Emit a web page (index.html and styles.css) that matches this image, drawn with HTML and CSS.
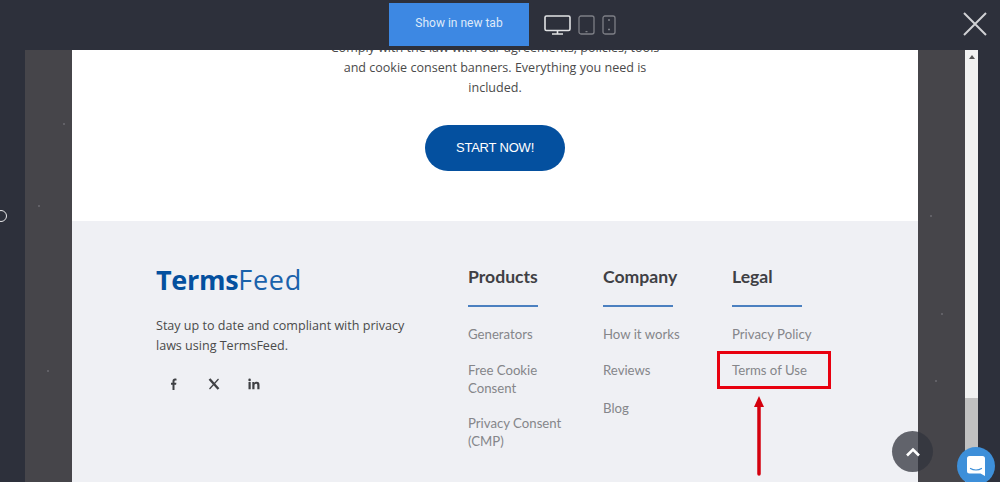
FILE: index.html
```html
<!DOCTYPE html>
<html lang="en">
<head>
    <meta charset="UTF-8">
    <meta name="viewport" content="width=device-width, initial-scale=1.0">
    <title>TermsFeed preview</title>
    <link rel="stylesheet" href="styles.css">
</head>
<body>
    <header class="topbar">
        <a class="new-tab" href="#">Show in new tab</a>
        <div class="devices">
            <svg width="27" height="20" viewBox="0 0 27 20" fill="none" stroke="#e2e3e5" stroke-width="1.6">
                <rect x="1" y="1" width="25" height="14.500" rx="1.500"/>
                <path d="M13.500 15.500v3M8 19h11"/>
            </svg>
            <svg width="17" height="20" viewBox="0 0 17 20" fill="none" stroke="#7d7f86" stroke-width="1.3">
                <rect x="1" y="1" width="15" height="18" rx="2"/>
                <path d="M7.500 16.600h2"/>
            </svg>
            <svg width="14" height="20" viewBox="0 0 14 20" fill="none" stroke="#7d7f86" stroke-width="1.3">
                <rect x="1" y="1" width="12" height="18" rx="2"/>
                <path d="M6 5h2M6 14.500h2" stroke-width="1.6"/>
            </svg>
        </div>
        <svg class="close" width="26" height="26" viewBox="0 0 26 26" stroke="#d0d1d4" stroke-width="2">
            <path d="M2 2l22 22M24 2L2 24"/>
        </svg>
    </header>

    <div class="stage">
        <div class="backdrop">
            <i class="star s1"></i><i class="star s2"></i><i class="star s3"></i><i class="star s4"></i><i class="star s5"></i><i class="star s6"></i>
            <div class="page">
                <section class="cta">
                    <p>Comply with the law with our agreements, policies, tools<br>and cookie consent banners. Everything you need is<br>included.</p>
                    <a class="start-btn" href="#">START NOW!</a>
                </section>
                <footer class="footer">
                    <div class="about">
                        <div class="logo"><b>Terms</b>Feed</div>
                        <p>Stay up to date and compliant with privacy laws using TermsFeed.</p>
                        <div class="social">
                            <svg width="12" height="12" viewBox="0 0 12 12" fill="#3f4044"><path d="M4.500 12V6.700H3V4.700h1.500V3.300C4.500 1.500 5.500.6 7 .6c.7 0 1.200.1 1.500.1v1.800h-1c-.8 0-1 .4-1 1v1.200h1.900l-.3 2H6.500V12z"/></svg>
                            <svg width="12" height="12" viewBox="0 0 12 12" fill="none" stroke="#3f4044"><path d="M1.500 1l9 10" stroke-width="2.400"/><path d="M10.500 1L1.500 11" stroke-width="1.200"/></svg>
                            <svg width="12" height="12" viewBox="0 0 12 12" fill="#3f4044"><circle cx="1.600" cy="1.900" r="1.300"/><path d="M.5 4h2.200v7.200H.5zM4.300 4h2.100v1c.4-.7 1.200-1.200 2.300-1.200 2 0 2.800 1.200 2.800 3.200v4.200H9.300V7.400c0-1-.3-1.700-1.200-1.700-1 0-1.600.7-1.600 1.800v3.700H4.300z"/></svg>
                        </div>
                    </div>
                    <nav class="links">
                        <div class="col col-products">
                            <h4>Products</h4>
                            <a href="#">Generators</a>
                            <a href="#">Free Cookie Consent</a>
                            <a href="#">Privacy Consent (CMP)</a>
                        </div>
                        <div class="col col-company">
                            <h4>Company</h4>
                            <a href="#">How it works</a>
                            <a href="#">Reviews</a>
                            <a class="blog" href="#">Blog</a>
                        </div>
                        <div class="col col-legal">
                            <h4>Legal</h4>
                            <a href="#">Privacy Policy</a>
                            <a class="marked" href="#">Terms of Use</a>
                        </div>
                    </nav>
                </footer>
            </div>
        </div>
        <div class="scrollbar">
            <span class="arrow-up"></span>
            <span class="thumb"></span>
        </div>
    </div>

    <i class="ring"></i>
    <svg class="red-arrow" width="10" height="80" viewBox="0 0 10 80">
        <path d="M5 0L10 11H0z" fill="#d4000e"/>
        <path d="M5 8v70" stroke="#d4000e" stroke-width="3.500" stroke-linecap="round"/>
    </svg>
    <div class="to-top">
        <svg width="16" height="10" viewBox="0 0 16 10" fill="none" stroke="#fff" stroke-width="2.600"><path d="M2 8.500l6-6 6 6"/></svg>
    </div>
    <div class="chat">
        <svg width="18" height="20" viewBox="0 0 18 20">
            <path d="M2.500 0h13A2.500 2.500 0 0 1 18 2.500V20l-4.500-2.500h-11A2.500 2.500 0 0 1 0 15V2.500A2.500 2.500 0 0 1 2.500 0z" fill="#fff"/>
            <path d="M3.500 12.500c3 2 8 2 11 0" fill="none" stroke="#3d8fd9" stroke-width="1.200" stroke-linecap="round"/>
        </svg>
    </div>
</body>
</html>
```

FILE: styles.css
```css
* {
    margin: 0;
    padding: 0;
    box-sizing: border-box;
}

html, body {
    height: 100%;
    overflow: hidden;
}

body {
    position: relative;
    display: flex;
    flex-direction: column;
    font-family: 'Open Sans', 'Noto Sans', sans-serif;
    background: #2d303b;
}

a {
    text-decoration: none;
    color: inherit;
}

.topbar {
    height: 50px;
    flex: none;
    position: relative;
    display: flex;
    justify-content: center;
    padding: 3px 0 0 6px;
    gap: 15px;
    background: #2d303b;
}

.new-tab {
    width: 140px;
    height: 43px;
    padding-top: 13px;
    background: #3d88e3;
    color: #dfeafa;
    font-family: 'Roboto', sans-serif;
    font-size: 12px;
    text-align: center;
}

.devices {
    display: flex;
    align-items: center;
    gap: 7px;
    height: 43px;
    width: 73px;
}

.close {
    position: absolute;
    right: 12px;
    top: 11px;
}

.stage {
    flex: 1;
    min-height: 0;
    display: flex;
    padding: 0 22px 0 25px;
}

.backdrop {
    flex: 1;
    position: relative;
    overflow: hidden;
    padding: 0 47px;
    background: #46454a;
}

.star {
    position: absolute;
    width: 2px;
    height: 2px;
    border-radius: 50%;
    background: #6b6a70;
}

.s1 { left: 38px; top: 73px; }
.s2 { left: 13px; top: 155px; }
.s3 { left: 22px; top: 320px; }
.s4 { left: 905px; top: 165px; }
.s5 { left: 916px; top: 263px; }
.s6 { left: 910px; top: 330px; }

.page {
    height: 100%;
    background: #fff;
    overflow: hidden;
}

.cta {
    height: 171px;
    text-align: center;
    overflow: hidden;
}

.cta p {
    margin-top: -12px;
    color: #4a4a4a;
    font-size: 12.55px;
    line-height: 20px;
}

.start-btn {
    display: block;
    width: 140px;
    height: 46px;
    margin: 27px auto 0;
    border-radius: 23px;
    background: #04509f;
    color: #fff;
    font-family: 'Liberation Sans', sans-serif;
    font-size: 13px;
    letter-spacing: -0.2px;
    line-height: 46px;
}

.footer {
    height: 261px;
    display: flex;
    padding: 43px 0 0 84px;
    background: #eff0f4;
}

.about {
    width: 312px;
    flex: none;
}

.logo {
    color: #1a62ab;
    font-size: 27px;
    line-height: 32px;
    letter-spacing: 0.7px;
}

.logo b {
    color: #04509f;
    font-weight: 700;
    letter-spacing: -0.3px;
}

.about p {
    width: 262px;
    margin-top: 20px;
    color: #4a4a4a;
    font-size: 12.55px;
    line-height: 20px;
}

.social {
    display: flex;
    gap: 28px;
    margin-top: 22px;
    padding-left: 12px;
}

.links {
    display: flex;
    margin-top: 1px;
}

.col {
    display: flex;
    flex-direction: column;
    align-items: flex-start;
    font-family: 'Lato', sans-serif;
    font-size: 13.2px;
    line-height: 18px;
    color: #85868a;
}

.col-products { width: 135px; }
.col-company { width: 129px; }
.col-legal { width: 110px; }

.col h4 {
    width: 70px;
    height: 42px;
    margin-bottom: 18px;
    border-bottom: 2px solid #4b80c0;
    color: #3f4044;
    font-size: 17.6px;
    font-weight: 700;
    line-height: 24px;
    white-space: nowrap;
}

.col a {
    margin-bottom: 17.5px;
    max-width: 100px;
}

.col .blog {
    margin-top: 3px;
}

.marked {
    position: relative;
}

.marked::after {
    content: "";
    position: absolute;
    left: -15px;
    top: -10px;
    width: 108px;
    height: 32px;
    border: 3px solid #e8000f;
}

.scrollbar {
    width: 13px;
    flex: none;
    position: relative;
    background: #f1f1f1;
}

.arrow-up {
    position: absolute;
    left: 4px;
    top: 5px;
    border: 3px solid transparent;
    border-top: 0;
    border-bottom: 4px solid #555;
}

.thumb {
    position: absolute;
    left: 0;
    right: 0;
    top: 348px;
    bottom: 0;
    background: #c1c1c1;
}

.ring {
    position: absolute;
    left: -5px;
    top: 210px;
    width: 12px;
    height: 12px;
    border: 1.5px solid #e8e8ea;
    border-radius: 50%;
}

.red-arrow {
    position: absolute;
    left: 754px;
    top: 396px;
}

.to-top {
    position: absolute;
    left: 892px;
    top: 431px;
    width: 41px;
    height: 41px;
    display: flex;
    align-items: center;
    justify-content: center;
    border-radius: 50%;
    background: rgba(50, 52, 62, 0.75);
}

.chat {
    position: absolute;
    left: 957px;
    top: 447px;
    width: 38px;
    height: 38px;
    display: flex;
    align-items: center;
    justify-content: center;
    border-radius: 50%;
    background: #3d8fd9;
}
```
